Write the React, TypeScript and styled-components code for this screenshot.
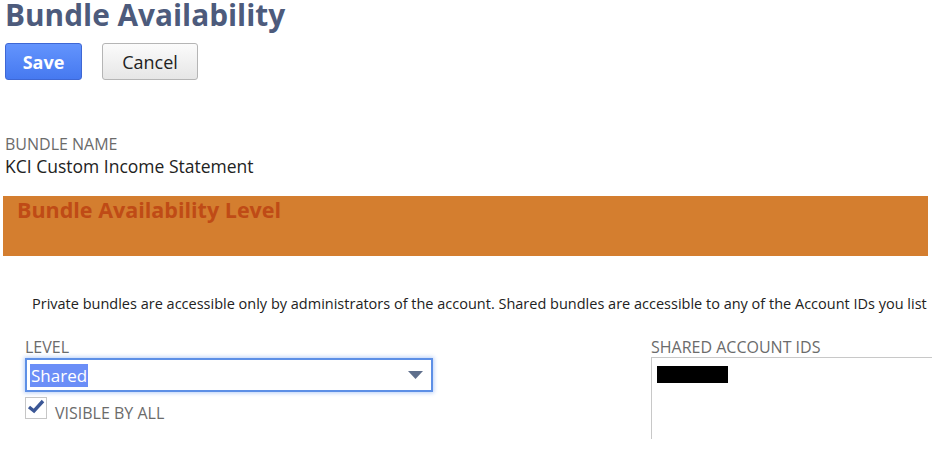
import React from "react";
import styled, { createGlobalStyle } from "styled-components";

const Global = createGlobalStyle`
  html, body { margin: 0; padding: 0; background: #fff; }
  body { font-family: "Open Sans", "Noto Sans", sans-serif; overflow: hidden; width: 932px; height: 467px; }
`;

const Page = styled.div`
  width: 932px;
  height: 467px;
  overflow: hidden;
  display: flex;
  flex-direction: column;
`;

const Title = styled.h1`
  margin: 0 0 0 5px;
  font-size: 29.8px;
  font-weight: 700;
  color: #4d5b7c;
  line-height: 30px;
`;

const Toolbar = styled.div`
  display: flex;
  gap: 20px;
  margin: 13px 0 0 5px;
`;

const Button = styled.button<{ $primary?: boolean }>`
  height: 37px;
  padding: 0;
  width: ${(p) => (p.$primary ? "77px" : "96px")};
  border-radius: 3px;
  font-family: "Open Sans", sans-serif;
  font-size: 18px;
  font-weight: ${(p) => (p.$primary ? 700 : 500)};
  color: ${(p) => (p.$primary ? "#fff" : "#222")};
  border: 1px solid ${(p) => (p.$primary ? "#3e67d4" : "#b5b5b5")};
  background: ${(p) =>
    p.$primary
      ? "linear-gradient(#6394fd, #4679f0)"
      : "linear-gradient(#fbfbfb, #e6e6e6)"};
`;

const Field = styled.div`
  margin: 54px 0 0 5px;
  display: flex;
  flex-direction: column;
`;

const Label = styled.div`
  font-size: 16px;
  color: #6b6b6b;
  line-height: 20px;
  text-transform: uppercase;
`;

const Value = styled.div`
  font-size: 17.5px;
  color: #222;
  line-height: 24px;
`;

const SectionBar = styled.div`
  margin: 18px 4px 0 3px;
  height: 60px;
  background: #d47e2f;
  padding: 0 0 0 14px;
  box-sizing: border-box;
`;

const SectionTitle = styled.div`
  font-size: 21.5px;
  font-weight: 700;
  color: #bf4b16;
  line-height: 28px;
`;

const Description = styled.div`
  margin: 38px 0 0 32px;
  font-size: 14.5px;
  color: #222;
  white-space: nowrap;
  line-height: 20px;
`;

const Columns = styled.div`
  display: grid;
  grid-template-columns: 408px 1fr;
  column-gap: 218px;
  margin: 23px 0 0 25px;
`;

const Column = styled.div`
  display: flex;
  flex-direction: column;
`;

const Select = styled.div`
  margin-top: 1px;
  height: 34px;
  box-sizing: border-box;
  border: 2px solid #5d8fe6;
  box-shadow: 0 0 4px 1px rgba(100, 150, 240, 0.45);
  display: flex;
  align-items: center;
  justify-content: space-between;
  padding: 0 8px 0 3px;
`;

const Selected = styled.span`
  background: #6b8ef7;
  color: #fff;
  font-size: 17px;
  line-height: 23px;
  padding: 0 1px 0 1px;
`;

const CheckRow = styled.div`
  display: flex;
  align-items: flex-start;
  gap: 8px;
  margin-top: 5px;
`;

const CheckBox = styled.div`
  width: 22px;
  height: 22px;
  box-sizing: border-box;
  border: 1px solid #c6c6c6;
  display: flex;
  align-items: flex-start;
  justify-content: center;
  padding-top: 1px;
`;

const CheckLabel = styled.span`
  font-size: 16px;
  color: #6b6b6b;
  line-height: 20px;
  margin-top: 6px;
`;

const TextArea = styled.div`
  margin-top: 0;
  height: 82px;
  box-sizing: border-box;
  border-left: 1px solid #c8c8c8;
  border-top: 1px solid #c8c8c8;
  padding: 8px 0 0 5px;
`;

const Redacted = styled.div`
  width: 71px;
  height: 17px;
  background: #000;
`;

export default function App() {
  return (
    <Page>
      <Global />
      <Title>Bundle Availability</Title>
      <Toolbar>
        <Button $primary>Save</Button>
        <Button>Cancel</Button>
      </Toolbar>
      <Field>
        <Label>BUNDLE NAME</Label>
        <Value>KCI Custom Income Statement</Value>
      </Field>
      <SectionBar>
        <SectionTitle>Bundle Availability Level</SectionTitle>
      </SectionBar>
      <Description>
        Private bundles are accessible only by administrators of the account. Shared bundles are accessible to any of the Account IDs you list
      </Description>
      <Columns>
        <Column>
          <Label>LEVEL</Label>
          <Select>
            <Selected>Shared</Selected>
            <svg width="15" height="8" viewBox="0 0 15 8">
              <path d="M0 0 H15 L7.5 8 Z" fill="#5f6f8c" />
            </svg>
          </Select>
          <CheckRow>
            <CheckBox>
              <svg width="18" height="15" viewBox="0 0 18 15">
                <path d="M2 8 L7 12 L16 2" stroke="#3b5796" strokeWidth="3.4" fill="none" />
              </svg>
            </CheckBox>
            <CheckLabel>VISIBLE BY ALL</CheckLabel>
          </CheckRow>
        </Column>
        <Column>
          <Label>SHARED ACCOUNT IDS</Label>
          <TextArea>
            <Redacted />
          </TextArea>
        </Column>
      </Columns>
    </Page>
  );
}
